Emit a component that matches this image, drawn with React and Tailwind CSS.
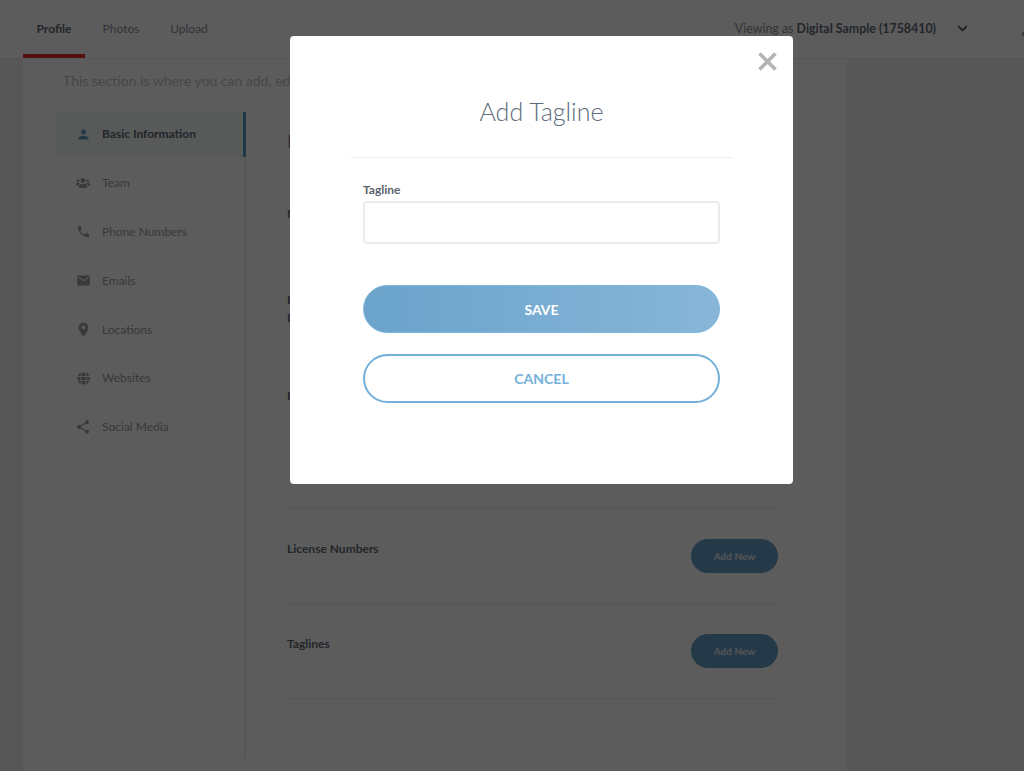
import React from "react";
import { FaUsers, FaGlobe } from "react-icons/fa";
import { MdPerson, MdPhone, MdEmail, MdLocationOn, MdShare } from "react-icons/md";
import { FiChevronDown, FiUser } from "react-icons/fi";

const menu = [
  { label: "Team", Icon: FaUsers, size: 14 },
  { label: "Phone Numbers", Icon: MdPhone, size: 15 },
  { label: "Emails", Icon: MdEmail, size: 15 },
  { label: "Locations", Icon: MdLocationOn, size: 17 },
  { label: "Websites", Icon: FaGlobe, size: 13 },
  { label: "Social Media", Icon: MdShare, size: 16 },
];

const Row = ({ label, className, button }) => (
  <div className={`flex justify-between border-b border-[#f0f0f0] pt-[31px] ${className}`}>
    <div className="text-[12px] leading-[18px] font-bold text-[#5f6a76] whitespace-pre-line">{label}</div>
    {button && (
      <button className="-mt-[1px] h-[34px] w-[87px] rounded-full bg-[#66a0ca] text-[10px] font-bold text-[#e8ecef]">
        Add New
      </button>
    )}
  </div>
);

const App = () => {
  return (
    <div className="relative h-[771px] overflow-hidden bg-[#f2f2f2] font-['Lato','Noto_Sans',sans-serif] text-[#5f6a76]">
      <header className="flex h-[59px] items-center justify-between border-b border-[#ececec] bg-white pl-[23px]">
        <nav className="flex h-full gap-1">
          <a className="flex h-full w-[62px] items-center justify-center border-b-4 border-[#e8302f] pt-[4px] text-[12px] font-bold">
            Profile
          </a>
          <a className="flex h-full w-[64px] items-center justify-center text-[12px] text-[#8b9096]">Photos</a>
          <a className="flex h-full w-[64px] items-center justify-center text-[12px] text-[#8b9096]">Upload</a>
        </nav>
        <div className="flex items-center text-[12.4px] text-[#8b9096]">
          <span>
            Viewing as <b className="font-bold text-[#5f6a76]">Digital Sample (1758410)</b>
          </span>
          <FiChevronDown className="ml-[19px] text-[#4a5560]" size={15} strokeWidth={3} />
          <FiUser className="mr-[-14px] ml-[50px] text-[#7c8690]" size={18} />
        </div>
      </header>

      <main className="ml-[23px] h-[712px] w-[824px] bg-white">
        <p className="whitespace-nowrap pt-[13px] pl-[40px] text-[14px] leading-[18px] text-[#c4c4c4]">
          This section is where you can add, edit, and remove the information that appears on all of your directory profiles.
        </p>
        <div className="mt-[20px] flex">
          <aside className="ml-[32px] h-[648px] w-[191px] border-r-2 border-[#efefef]">
            <div className="flex h-[48.8px] items-center">
              <div className="flex h-[45px] w-[calc(100%+2px)] shrink-0 items-center border-r-[3px] border-[#5d9cc9] bg-[#f4f5f6]">
                <span className="flex w-[47px] justify-center pl-[9px] text-[#5d9cc9]">
                  <MdPerson size={15} />
                </span>
                <span className="text-[12px] font-bold">Basic Information</span>
              </div>
            </div>
            {menu.map(({ label, Icon, size }) => (
              <div key={label} className="flex h-[48.8px] items-center text-[12px] text-[#9a9da1]">
                <span className="flex w-[47px] justify-center pl-[9px]">
                  <Icon size={size} />
                </span>
                {label}
              </div>
            ))}
          </aside>
          <section className="ml-[41px] w-[491px]">
            <h2 className="pt-[19px] pb-[21px] text-[18px] leading-[24px] text-[#7c8690]">Basic Information</h2>
            <Row label="Name" className="h-[86px]" />
            <Row label={"Business\nLogo"} className="h-[96px]" />
            <Row label="Photo" className="h-[153px]" />
            <Row label="License Numbers" className="h-[95px]" button />
            <Row label="Taglines" className="h-[95px]" button />
          </section>
        </div>
      </main>

      {/* modal */}
      <div className="fixed inset-0 bg-black/[0.64]">
        <div className="relative mt-[36px] ml-[290px] h-[448px] w-[503px] rounded-[4px] bg-white pt-[60px]">
          <button className="absolute top-[16px] right-[16px] text-[#b4b4b4]">
            <svg width="19" height="19" viewBox="0 0 19 19" stroke="currentColor" strokeWidth="3.6">
              <path d="M1.5 1.5 17.5 17.5M17.5 1.5 1.5 17.5" />
            </svg>
          </button>
          <h1 className="text-center text-[25px] leading-[30px] font-light text-[#5b6b7c]">Add Tagline</h1>
          <div className="mx-[60px] mt-[31px] border-t border-[#f0f0f0]" />
          <div className="mx-[73px]">
            <label className="mt-[24px] block text-[12px] leading-[16px] font-bold text-[#59636e]">Tagline</label>
            <input className="mt-[3px] block h-[43px] w-full rounded-[4px] border-2 border-[#ebebeb] bg-white" />
            <button className="mt-[41px] block h-[48px] w-full rounded-full border border-[#7fb8de] bg-gradient-to-r from-[#6ba3cb] to-[#87b6d8] text-[14px] font-bold text-white">
              SAVE
            </button>
            <button className="mt-[21px] block h-[49px] w-full rounded-full border-2 border-[#74b0da] bg-white text-[14px] font-bold text-[#74b0da]">
              CANCEL
            </button>
          </div>
        </div>
      </div>
    </div>
  );
};

export default App;
